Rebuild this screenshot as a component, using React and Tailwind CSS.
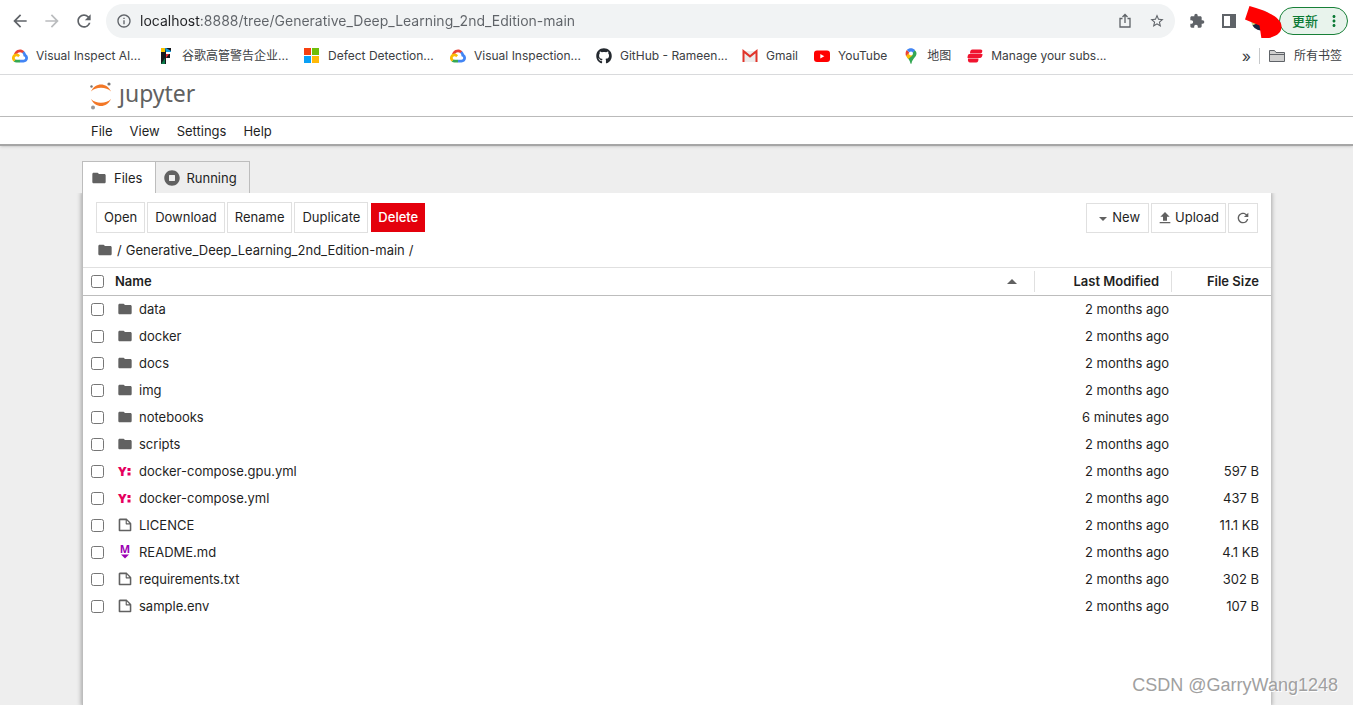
import React, { useState } from "react";
import { FaGithub } from "react-icons/fa";
import {
  MdArrowBack,
  MdArrowForward,
  MdExtension,
  MdFolder,
  MdInfoOutline,
  MdMoreVert,
  MdRefresh,
  MdStarBorder,
} from "react-icons/md";

const files = [
  { name: "data", type: "folder", modified: "2 months ago", size: "" },
  { name: "docker", type: "folder", modified: "2 months ago", size: "" },
  { name: "docs", type: "folder", modified: "2 months ago", size: "" },
  { name: "img", type: "folder", modified: "2 months ago", size: "" },
  { name: "notebooks", type: "folder", modified: "6 minutes ago", size: "" },
  { name: "scripts", type: "folder", modified: "2 months ago", size: "" },
  { name: "docker-compose.gpu.yml", type: "yaml", modified: "2 months ago", size: "597 B" },
  { name: "docker-compose.yml", type: "yaml", modified: "2 months ago", size: "437 B" },
  { name: "LICENCE", type: "file", modified: "2 months ago", size: "11.1 KB" },
  { name: "README.md", type: "markdown", modified: "2 months ago", size: "4.1 KB" },
  { name: "requirements.txt", type: "file", modified: "2 months ago", size: "302 B" },
  { name: "sample.env", type: "file", modified: "2 months ago", size: "107 B" },
];

const bookmarks = [
  { label: "Visual Inspect AI...", icon: <CloudLogo />, wide: true },
  { label: "谷歌高管警告企业...", icon: <FLogo />, wide: true },
  { label: "Defect Detection...", icon: <MicrosoftLogo />, wide: true },
  { label: "Visual Inspection...", icon: <CloudLogo />, wide: true },
  { label: "GitHub - Rameen...", icon: <FaGithub className="size-4 text-[#24292f]" />, wide: true },
  { label: "Gmail", icon: <GmailLogo /> },
  { label: "YouTube", icon: <YouTubeLogo /> },
  { label: "地图", icon: <MapsLogo /> },
  { label: "Manage your subs...", icon: <ExpressLogo /> },
];

function CloudLogo() {
  return (
    <svg viewBox="0 -25 256 256" className="size-4">
      <path fill="#ea4335" d="M170.25 56.82l22.25-22.25 1.48-9.37C153.44-11.68 88.98-7.5 52.42 33.92 42.27 45.42 34.73 59.76 30.72 74.57l7.97-1.12 44.5-7.34 3.44-3.51c19.8-21.75 53.27-24.67 76.13-6.17z" />
      <path fill="#4285f4" d="M224.2 73.92a100.2 100.2 0 0 0-30.21-48.72l-31.23 31.23a55.5 55.5 0 0 1 20.38 44.04v5.54c15.35 0 27.8 12.45 27.8 27.8s-12.45 27.48-27.8 27.48h-55.67l-5.47 5.93v33.34l5.47 5.23h55.67c39.93.31 72.55-31.49 72.86-71.42a72.3 72.3 0 0 0-31.8-60.45" />
      <path fill="#34a853" d="M71.87 205.8h55.59v-44.51H71.87c-3.96 0-7.8-.85-11.4-2.5l-7.89 2.42-22.4 22.25-1.96 7.58a72 72 0 0 0 43.65 14.76" />
      <path fill="#fbbc05" d="M71.87 61.43A72.3 72.3 0 0 0 28.22 191.04l32.25-32.25a27.8 27.8 0 1 1 36.78-36.77l32.24-32.25a72.2 72.2 0 0 0-57.62-28.34" />
    </svg>
  );
}

function FLogo() {
  return (
    <svg viewBox="0 0 16 16" className="size-4">
      <path fill="#15171c" d="M3 0h10v4H8v2h4v4H8v6H3z" />
      <path fill="#f5c400" d="M3 0h4v4H3z" />
      <path fill="#1a9ed9" d="M7 0h1l5 3v1H8z" />
      <path fill="#e8252c" d="M8 6h3l-3 4z" />
      <path fill="#0c7a4a" d="M3 16l4-6v6z" />
    </svg>
  );
}

function MicrosoftLogo() {
  return (
    <svg viewBox="0 0 16 16" className="size-4">
      <path fill="#f7400f" d="M0 0h7v7H0z" />
      <path fill="#6fbe0a" d="M8 0h7v7H8z" />
      <path fill="#0aa0f5" d="M0 8h7v7H0z" />
      <path fill="#ffb908" d="M8 8h7v7H8z" />
    </svg>
  );
}

function GmailLogo() {
  return (
    <svg viewBox="0 0 16 16" className="size-4">
      <path fill="#ececec" d="M1 3h14v11H1z" />
      <path fill="none" stroke="#e0352b" strokeWidth="2" d="M1.5 14V3.2L8 8.4l6.5-5.2V14" />
    </svg>
  );
}

function YouTubeLogo() {
  return (
    <svg viewBox="0 0 16 16" className="size-4">
      <rect y="2.5" width="16" height="11.5" rx="3" fill="#f00" />
      <path fill="#fff" d="M6.3 5.9v4.6l4-2.3z" />
    </svg>
  );
}

function MapsLogo() {
  return (
    <svg viewBox="0 0 16 16" className="size-4">
      <path fill="#34a853" d="M13.5 5.5C13.5 9 9 11 8.6 15.2c-.1.9-1.1.9-1.2 0C7 12.8 5.5 11.2 4.3 9.6L11.5 2c1.2.8 2 2 2 3.500z" />
      <path fill="#fbbc04" d="M3 7.5l3.5-3 3 3-4.3 3.4C4.3 9.8 3.4 8.8 3 7.500z" />
      <path fill="#ea4335" d="M3.8 2L6.5 4.5 3 8c-.8-2-.5-4.400.8-6z" />
      <path fill="#4285f4" d="M3.8 2C5.8-.3 9.6-.6 12 2L9.5 5.3 6.5 4.500z" />
      <circle cx="8" cy="5.5" r="2" fill="#fff" />
    </svg>
  );
}

function ExpressLogo() {
  return (
    <svg viewBox="0 0 16 16" className="size-4">
      <path fill="#f0142f" d="M5.500 1.500h8c1.700 0 2.200 1.200 1.600 2.500-.4 1-1 1.500-2 1.500H3c0-2.500.8-4 2.500-4z" />
      <path fill="#f0142f" d="M2.500 6h13c0 2.300-.8 4-2.700 4H.5c0-2.300.5-4 2-4z" />
      <path fill="#f0142f" d="M1 10.500h10.500c0 2.500-.7 4-2.300 4H3c-1.600 0-2.300-1.500-2-4z" />
    </svg>
  );
}

function JupyterLogo() {
  return (
    <svg viewBox="0 0 22 28" className="h-7 w-[22px]">
      <path fill="#f37726" d="M1 9.5C3 5 7 2.500 11 2.500S19 5 21 9.500C18.500 7 15 5.800 11 5.800S3.500 7 1 9.500z" />
      <path fill="#f37726" d="M1 17c2 4.500 6 7 10 7s8-2.500 10-7c-2.500 2.500-6 3.700-10 3.700S3.500 19.500 1 17z" />
      <circle cx="19" cy="2" r="1.6" fill="#767677" />
      <circle cx="1.5" cy="4.5" r="1.2" fill="#767677" />
      <circle cx="3" cy="25.5" r="2" fill="#989798" />
    </svg>
  );
}

function RunningIcon() {
  return (
    <svg viewBox="0 0 512 512" className="size-4" fill="#616161">
      <path d="M256 8C119 8 8 119 8 256s111 248 248 248 248-111 248-248S393 8 256 8zm96 328c0 8.8-7.2 16-16 16H176c-8.8 0-16-7.2-16-16V176c0-8.8 7.2-16 16-16h160c8.8 0 16 7.2 16 16v160z" />
    </svg>
  );
}

function FileIcon({ type }) {
  if (type === "folder") {
    return <MdFolder className="size-4 text-[#616161]" />;
  }
  if (type === "yaml") {
    return (
      <svg viewBox="0 0 16 16" className="size-4 overflow-visible" fill="#e6005c">
        <text x="1" y="12.5" fontSize="13" fontWeight="800" fontFamily="Open Sans, sans-serif">
          Y
        </text>
        <rect x="10.5" y="5" width="3" height="3" />
        <rect x="10.5" y="9.5" width="3" height="3" />
      </svg>
    );
  }
  if (type === "markdown") {
    return (
      <svg viewBox="0 0 16 16" className="size-4 overflow-visible" fill="#9c00b3">
        <text x="8" y="9" fontSize="11" fontWeight="700" textAnchor="middle" fontFamily="Open Sans, sans-serif">
          M
        </text>
        <path d="M4 10.5h8L8 14.500z" />
      </svg>
    );
  }
  return (
    <svg viewBox="0 0 22 22" className="size-4" fill="#616161">
      <path d="M19.3 8.2l-5.5-5.5c-.3-.3-.7-.5-1.2-.5H3.9c-.8.1-1.6.9-1.6 1.8v14.1c0 .9.7 1.6 1.6 1.6h14.2c.9 0 1.6-.7 1.6-1.6V9.4c.1-.5-.1-.9-.4-1.2zm-5.8-3.3l3.4 3.6h-3.4V4.9zm3.9 12.7H4.7c-.1 0-.2 0-.2-.2V4.7c0-.2.1-.3.2-.3h7.2v4.4s0 .8.3 1.1c.3.3 1.1.3 1.1.3h4.3v7.2s-.1.2-.2.2z" />
    </svg>
  );
}

function BrowserBar() {
  const [url, setUrl] = useState(
    "localhost:8888/tree/Generative_Deep_Learning_2nd_Edition-main"
  );

  return (
    <header className="border-b border-[#d9dadc] bg-white text-[#3c4043]">
      <div className="flex h-[42px] items-center pr-[5px] pl-[10px]">
        <div className="flex items-center gap-3 pr-3 text-[#5f6368]">
          <button aria-label="Back">
            <MdArrowBack className="size-5" />
          </button>
          <button aria-label="Forward" className="text-[#babcbe]">
            <MdArrowForward className="size-5" />
          </button>
          <button aria-label="Reload">
            <MdRefresh className="size-5" />
          </button>
        </div>
        <div className="flex h-[34px] flex-1 items-center rounded-full bg-[#f1f3f4] px-[10px] text-[#5f6368]">
          <MdInfoOutline className="size-4" />
          <input
            aria-label="Address"
            className="ml-2 min-w-0 flex-1 bg-[linear-gradient(to_right,#202124_60px,#5f6368_60px)] bg-clip-text text-sm text-transparent outline-none"
            value={url}
            onChange={(e) => setUrl(e.target.value)}
          />
          <button aria-label="Share">
            <svg viewBox="0 0 16 16" className="size-4" fill="none" stroke="currentColor" strokeWidth="1.3">
              <path d="M5.5 5.500h-2.500v8.500h10V5.500h-2.500M8 10V1.500M5.500 4L8 1.500 10.500 4" />
            </svg>
          </button>
          <button aria-label="Bookmark" className="ml-4">
            <MdStarBorder className="size-4" />
          </button>
        </div>
        <div className="ml-[14px] flex items-center gap-4 text-[#5f6368]">
          <button aria-label="Extensions">
            <MdExtension className="size-4" />
          </button>
          <button aria-label="Side panel">
            <svg viewBox="0 0 16 16" className="size-4" fill="currentColor">
              <path d="M1 1h14v14H1zM3 3v10h6V3z" fillRule="evenodd" />
            </svg>
          </button>
        </div>
        <button aria-label="Profile" className="relative z-10 mx-1 size-[34px]">
          <svg viewBox="-3 0 42 34" className="absolute top-0 left-0 h-[34px] w-[42px]">
            <circle cx="17" cy="16" r="10" fill="#9fc3dc" />
            <path fill="#c9d47a" d="M7 16a10 10 0 0 1 3-7l6 10-7 3z" />
            <path fill="#17223f" d="M8.5 21.500L16 18l4 8a10 10 0 0 1-11.500-4.500z" />
            <path fill="#f00" d="M5.500 2L1 15.500l14.500 6L17.500 35C32 34 38 29 37.500 22 37 14 24 7 5.500 2z" />
          </svg>
        </button>
        <button className="flex h-7 items-center gap-[7px] rounded-full border border-[#188038] bg-[#e8f3ec] pr-1 pl-3 font-medium text-[#0b7a35]">
          更新
          <MdMoreVert className="size-[18px]" />
        </button>
      </div>
      <nav className="flex h-8 items-center pr-[11px] pb-1 pl-3 text-xs">
        <div className="flex flex-1 items-center gap-4">
          {bookmarks.map((item, index) => (
            <a
              key={index}
              href="#"
              className={
                item.wide
                  ? "flex w-[130px] shrink-0 items-center gap-2 whitespace-nowrap"
                  : "flex shrink-0 items-center gap-2 whitespace-nowrap"
              }
            >
              <span className="shrink-0">{item.icon}</span>
              {item.label}
            </a>
          ))}
        </div>
        <button aria-label="More bookmarks" className="pr-2 text-base leading-4">
          »
        </button>
        <a href="#" className="flex items-center gap-2 border-l border-[#c6c8ca] pl-2 whitespace-nowrap">
          <svg viewBox="0 0 18 16" className="h-4 w-[18px]" fill="#d0d0d0" stroke="#5f6368">
            <path d="M1.5 13.500v-11h5l1.500 2h8.500v9z" />
            <path d="M1.5 6.500h15" />
          </svg>
          所有书签
        </a>
      </nav>
    </header>
  );
}

function FileTable() {
  return (
    <table className="w-full table-fixed border-collapse">
      <colgroup>
        <col />
        <col className="w-[137px]" />
        <col className="w-[100px]" />
      </colgroup>
      <thead>
        <tr className="h-7 border-t border-b border-t-[#e0e0e0] border-b-[#bdbdbd]">
          <th className="p-0 text-left font-semibold">
            <div className="flex items-center pr-[17px] pl-2">
              <input type="checkbox" aria-label="Select all" className="size-[13px]" />
              <span className="ml-[11px] flex-1">Name</span>
              <svg viewBox="0 0 10 10" className="size-[10px]" fill="#616161">
                <path d="M0 7l5-5 5 5z" />
              </svg>
            </div>
          </th>
          <th className="p-0 text-right font-semibold">
            <div className="border-l border-[#e0e0e0] pr-3">Last Modified</div>
          </th>
          <th className="p-0 text-right font-semibold">
            <div className="border-l border-[#e0e0e0] pr-3">File Size</div>
          </th>
        </tr>
      </thead>
      <tbody>
        {files.map((file) => (
          <tr key={file.name} className="h-[27px]">
            <td className="p-0">
              <div className="flex items-center pl-2">
                <input type="checkbox" id={file.name} className="size-[13px]" />
                <label htmlFor={file.name} className="ml-[13px] flex items-center gap-[6px]">
                  <FileIcon type={file.type} />
                  {file.name}
                </label>
              </div>
            </td>
            <td className="p-0 pr-[2px] text-right">{file.modified}</td>
            <td className="p-0 pr-3 text-right">{file.size}</td>
          </tr>
        ))}
      </tbody>
    </table>
  );
}

function FilesPanel() {
  const actions = ["Open", "Download", "Rename", "Duplicate"];

  return (
    <main className="mx-[82px] mt-[15px] flex flex-1 flex-col">
      <div role="tablist" className="flex h-8">
        <button
          role="tab"
          aria-selected="true"
          className="z-10 flex items-center gap-[7px] border-t border-l border-[#bdbdbd] bg-white pt-px pr-[13px] pl-2"
        >
          <MdFolder className="size-4 text-[#616161]" />
          Files
        </button>
        <button
          role="tab"
          aria-selected="false"
          className="flex items-center gap-[6px] border border-b-0 border-[#bdbdbd] bg-[#eee] pt-px pr-3 pl-2"
        >
          <RunningIcon />
          Running
        </button>
      </div>
      <section className="flex-1 border-l border-[#bdbdbd] bg-white shadow-[0_0_4px_1px_rgba(87,87,87,0.45)] [clip-path:inset(0_-10px_0_-10px)]">
        <div className="flex items-center justify-between px-[13px] pt-[9px]">
          <div className="flex gap-[2px]">
            {actions.map((action) => (
              <button key={action} className="h-[31px] border border-[#e0e0e0] px-[7px]">
                {action}
              </button>
            ))}
            <button className="h-[31px] border border-white bg-[#e4000c] bg-clip-padding px-[7px] font-medium text-white">
              Delete
            </button>
          </div>
          <div className="flex gap-[2px]">
            <button className="flex h-[30px] items-center gap-1 border border-[#e0e0e0] pr-2 pl-[11px]">
              <svg viewBox="0 0 10 10" className="size-[10px]" fill="#616161">
                <path d="M1 4h8L5 8z" />
              </svg>
              New
            </button>
            <button className="flex h-[30px] items-center gap-[2px] border border-[#e0e0e0] pr-[6px] pl-[5px]">
              <svg viewBox="0 0 24 24" className="size-4" fill="#616161">
                <path d="M9 16h6v-6h4l-7-7-7 7h4zm-5 2h16v2H4z" />
              </svg>
              Upload
            </button>
            <button aria-label="Refresh" className="flex size-[30px] items-center justify-center border border-[#e0e0e0]">
              <svg viewBox="0 0 18 18" className="size-4" fill="#616161">
                <path d="M9 13.5c-2.49 0-4.5-2.01-4.5-4.5S6.51 4.5 9 4.5c1.24 0 2.36.52 3.17 1.33L10 8h5V3l-1.76 1.76C12.15 3.68 10.66 3 9 3 5.69 3 3.01 5.69 3.01 9S5.69 15 9 15c2.97 0 5.43-2.16 5.9-5h-1.52c-.46 2-2.24 3.5-4.38 3.5z" />
              </svg>
            </button>
          </div>
        </div>
        <div className="flex h-[34px] items-center gap-1 pl-[14px]">
          <MdFolder className="size-4 text-[#616161]" />
          <span>/</span>
          <a href="#">Generative_Deep_Learning_2nd_Edition-main</a>
          <span>/</span>
        </div>
        <FileTable />
      </section>
    </main>
  );
}

function App() {
  const menus = ["File", "View", "Settings", "Help"];

  return (
    <div className="relative flex min-h-screen flex-col bg-[#eee] font-[Inter,'Noto_Sans_CJK_SC',sans-serif] text-[13px] leading-[21px] text-[#1f1f1f]">
      <BrowserBar />
      <div className="flex h-[42px] items-center gap-[7px] border-b border-[#bdbdbd] bg-white pl-[90px]">
        <JupyterLogo />
        <span aria-label="jupyter" className="pb-[6px] font-['Noto_Sans',sans-serif] text-[23px] leading-8 text-[#616161]">
          ȷupyter
        </span>
      </div>
      <nav className="flex h-[29px] items-center gap-[17px] border-b-2 border-[#a6a6a6] bg-white pt-[2px] pl-[91px] shadow-sm">
        {menus.map((menu) => (
          <button key={menu}>{menu}</button>
        ))}
      </nav>
      <FilesPanel />
      <div className="pointer-events-none absolute right-[15px] bottom-[6px] z-20 font-['Liberation_Sans',sans-serif] text-lg text-[#a0a0a0] [text-shadow:1px_1px_0_#ffffff]">
        CSDN @GarryWang1248
      </div>
    </div>
  );
}

export default App;
